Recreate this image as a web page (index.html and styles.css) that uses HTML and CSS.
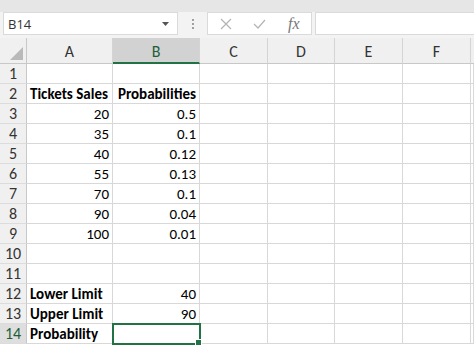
FILE: index.html
```html
<!DOCTYPE html>
<html lang="en">
  <head>
    <meta charset="UTF-8" />
    <title>Sheet1</title>
    <link rel="stylesheet" href="styles.css">
  </head>
  <body>
    <div class="ribbon-edge"></div>
    <div class="formula-bar">
      <div class="name-box">
        <span>B14</span>
        <svg class="caret" width="7" height="4" viewBox="0 0 7 4"><path d="M0 0h7L3.5 4z" fill="#555"/></svg>
      </div>
      <div class="grip">
        <i></i><i></i><i></i>
      </div>
      <div class="fx-buttons">
        <svg width="12" height="12" viewBox="0 0 12 12"><path d="M1 1l10 10M11 1L1 11" stroke="#b4b4b4" stroke-width="1.2" fill="none"/></svg>
        <svg width="13" height="10" viewBox="0 0 13 10"><path d="M1 5l4 4 7-8" stroke="#b4b4b4" stroke-width="1.2" fill="none"/></svg>
        <span class="fx">fx</span>
      </div>
      <div class="formula-input"></div>
    </div>

    <div class="sheet">
      <div class="corner"><span class="tri"></span></div>
      <div class="col-head">A</div>
      <div class="col-head active">B</div>
      <div class="col-head">C</div>
      <div class="col-head">D</div>
      <div class="col-head">E</div>
      <div class="col-head">F</div>
      <div class="col-head tail"></div>
    </div>
    <div class="sheet" id="rows"></div>

    <script>
      // 表格数据
      const data = [
        ["", ""],
        ["Tickets Sales", "Probabilities", true],
        ["20", "0.5"],
        ["35", "0.1"],
        ["40", "0.12"],
        ["55", "0.13"],
        ["70", "0.1"],
        ["90", "0.04"],
        ["100", "0.01"],
        ["", ""],
        ["", ""],
        ["Lower Limit", "40", "label"],
        ["Upper Limit", "90", "label"],
        ["Probability", "", "label"]
      ];

      const rows = document.getElementById("rows");
      data.forEach((row, i) => {
        const n = i + 1;
        let html = `<div class="row-head${n === 14 ? " active" : ""}">${n}</div>`;
        const bold = row[2] === true;
        const label = row[2] === "label";
        html += `<div class="cell num${bold || label ? " bold left" : ""}">${row[0]}</div>`;
        html += `<div class="cell num${bold ? " bold" : ""}${n === 14 ? " selected" : ""}">${row[1]}</div>`;
        for (let c = 0; c < 5; c++) html += `<div class="cell"></div>`;
        rows.insertAdjacentHTML("beforeend", html);
      });
    </script>
  </body>
</html>
```

FILE: styles.css
```css
* {
  margin: 0;
  padding: 0;
  box-sizing: border-box;
}

body {
  width: 474px;
  height: 348px;
  overflow: hidden;
  background: #fff;
  font-family: "Carlito", "Liberation Sans Narrow", "Liberation Sans", sans-serif;
  color: #000;
}

.ribbon-edge {
  height: 12px;
  background: #e6e6e6;
}

/* 编辑栏 */
.formula-bar {
  display: flex;
  height: 26px;
  padding: 0 0 3px 3px;
  background: #f3f3f3;
}

.name-box {
  width: 175px;
  background: #fff;
  border: 1px solid #dadada;
  display: flex;
  align-items: center;
  justify-content: space-between;
  padding: 0 8px 0 4px;
  font-family: "Open Sans", sans-serif;
  font-size: 13px;
  color: #333;
}

.grip {
  width: 29px;
  display: flex;
  flex-direction: column;
  align-items: center;
  justify-content: center;
  gap: 2px;
}

.grip i {
  width: 2px;
  height: 2px;
  background: #a0a0a0;
}

.fx-buttons {
  width: 105px;
  background: #fff;
  border: 1px solid #dadada;
  display: flex;
  align-items: center;
  padding-left: 12px;
  gap: 21px;
}

.fx {
  font-family: "Liberation Serif", serif;
  font-style: italic;
  font-size: 16px;
  color: #777;
  margin-left: 1px;
}

.formula-input {
  flex: 1;
  margin-left: 3px;
  background: #fff;
  border: 1px solid #dadada;
  border-right: none;
}

/* 表格 */
.sheet {
  display: grid;
  grid-template-columns: 27px 86px 87px 68px 67px 68px 68px 3px;
}

#rows {
  grid-auto-rows: 20px;
}

.corner {
  height: 26px;
  background: #f0f0f0;
  border-right: 1px solid #c8c8c8;
  border-bottom: 1px solid #c8c8c8;
  position: relative;
}

.tri {
  position: absolute;
  right: 3px;
  bottom: 3px;
  width: 0;
  height: 0;
  border-left: 13px solid transparent;
  border-bottom: 13px solid #b9b9b9;
}

.col-head {
  height: 26px;
  background: #f0f0f0;
  border-right: 1px solid #d4d4d4;
  border-bottom: 1px solid #c8c8c8;
  text-align: center;
  font-size: 16px;
  line-height: 27px;
  color: #333;
}

.col-head.active {
  background: #d2d2d2;
  color: #1e5f3a;
  border-bottom: 2px solid #217346;
}

.col-head.tail {
  border-right: none;
}

.row-head {
  background: #f0f0f0;
  border-right: 1px solid #c8c8c8;
  border-bottom: 1px solid #dcdcdc;
  font-size: 16px;
  line-height: 20px;
  text-align: center;
  color: #333;
}

.row-head.active {
  background: #dedede;
  color: #1e5f3a;
}

.cell {
  border-right: 1px solid #d8d8d8;
  border-bottom: 1px solid #d8d8d8;
  font-size: 15px;
  line-height: 20px;
  white-space: nowrap;
  overflow: visible;
}

.cell.num {
  text-align: right;
  padding-right: 3px;
}

.cell.left {
  text-align: left;
  padding-left: 3px;
}

.bold {
  font-weight: bold;
}

.selected {
  position: relative;
  outline: 2px solid #217346;
  outline-offset: -1px;
}

.selected::after {
  content: "";
  position: absolute;
  right: -3px;
  bottom: -3px;
  width: 5px;
  height: 5px;
  background: #217346;
  border: 1px solid #fff;
}
```
